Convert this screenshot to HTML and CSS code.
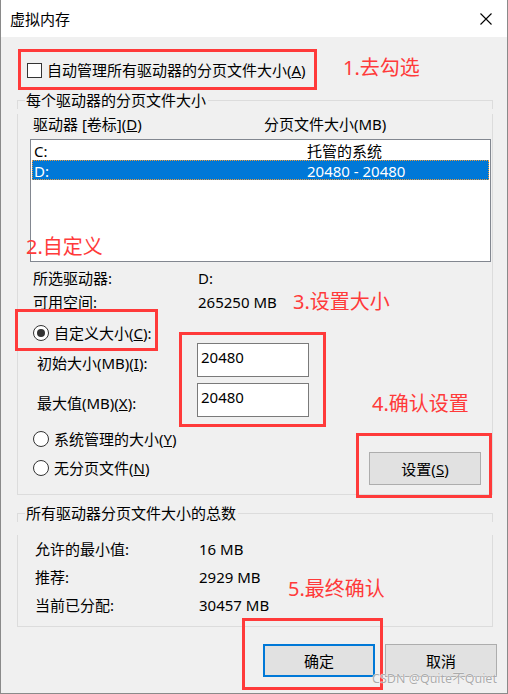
FILE: index.html
```html
<!DOCTYPE html>
<html lang="zh-CN">
<head>
<meta charset="utf-8">
<title>虚拟内存</title>
<link rel="stylesheet" href="styles.css">
</head>
<body>
<div class="window">
  <div class="titlebar">
    <span class="title">虚拟内存</span>
    <svg class="close" viewBox="0 0 12 12" width="12" height="12"><path d="M0.5 0.5 L11.5 11.5 M11.5 0.5 L0.5 11.5" stroke="#000" stroke-width="1.1" fill="none"/></svg>
  </div>
  <div class="content">
    <div class="auto-row"><span class="checkbox"></span><span>自动管理所有驱动器的分页文件大小(<u>A</u>)</span></div>

    <section class="group g1">
      <div class="group-head"><span>每个驱动器的分页文件大小</span></div>
      <div class="group-body">
        <div class="list-head"><span>驱动器 [卷标](<u>D</u>)</span><span>分页文件大小(MB)</span></div>
        <div class="listbox">
          <div class="row"><span>C:</span><span>托管的系统</span></div>
          <div class="row selected"><span>D:</span><span>20480 - 20480</span></div>
        </div>
        <div class="info">
          <span>所选驱动器:</span><span>D:</span>
          <span>可用空间:</span><span>265250 MB</span>
        </div>
        <div class="radio-row custom"><span class="radio checked"></span><span>自定义大小(<u>C</u>):</span></div>
        <div class="size-grid">
          <span class="size-label">初始大小(MB)(<u>I</u>):</span><div class="textbox">20480</div>
          <span class="size-label">最大值(MB)(<u>X</u>):</span><div class="textbox">20480</div>
        </div>
        <div class="bottom">
          <div class="radios">
            <div class="radio-row"><span class="radio"></span><span>系统管理的大小(<u>Y</u>)</span></div>
            <div class="radio-row second"><span class="radio"></span><span>无分页文件(<u>N</u>)</span></div>
          </div>
          <button class="btn set">设置(<u>S</u>)</button>
        </div>
      </div>
    </section>

    <section class="group g2">
      <div class="group-head"><span>所有驱动器分页文件大小的总数</span></div>
      <div class="group-body">
        <div class="totals">
          <span>允许的最小值:</span><span>16 MB</span>
          <span>推荐:</span><span>2929 MB</span>
          <span>当前已分配:</span><span>30457 MB</span>
        </div>
      </div>
    </section>

    <div class="actions">
      <button class="btn ok">确定</button>
      <button class="btn">取消</button>
    </div>
  </div>

  <div class="mark m1"></div>
  <div class="mark m2"></div>
  <div class="mark m3"></div>
  <div class="mark m4"></div>
  <div class="mark m5"></div>
  <div class="note n1">1.去勾选</div>
  <div class="note n2">2.自定义</div>
  <div class="note n3">3.设置大小</div>
  <div class="note n4">4.确认设置</div>
  <div class="note n5">5.最终确认</div>
  <div class="watermark">CSDN @Quite不Quiet</div>
</div>
</body>
</html>
```
FILE: styles.css
```css
body {
  margin: 0;
  background: #fff;
  font-family: "Noto Sans", "Noto Sans CJK SC", sans-serif;
  font-size: 15px;
  color: #000;
}

.window {
  position: relative;
  width: 508px;
  height: 694px;
  box-sizing: border-box;
  border: 1px solid #8a8a8a;
  border-top: none;
  background: #f0f0f0;
  overflow: hidden;
}

.titlebar {
  height: 37px;
  background: #fff;
  display: flex;
  align-items: center;
  justify-content: space-between;
  padding: 0 15px 0 9px;
}

.title {
  line-height: 20px;
  margin-top: 1px;
}

.close {
  display: block;
  width: 12px;
  height: 12px;
}

.auto-row {
  display: flex;
  align-items: center;
  height: 20px;
  line-height: 20px;
  margin-top: 23px;
  padding-left: 26px;
}

.checkbox {
  width: 15px;
  height: 15px;
  box-sizing: border-box;
  border: 1px solid #333;
  background: #fff;
  margin-right: 5px;
}

.group {
  margin-left: 16px;
  width: 476px;
}

.g1 { margin-top: 11px; }
.g2 { margin-top: 9px; }

.group-head {
  display: flex;
  height: 18px;
  line-height: 18px;
}

.group-head::before,
.group-head::after {
  content: "";
  box-sizing: border-box;
  height: 9px;
  align-self: flex-end;
  border-top: 1px solid #dcdcdc;
}

.group-head::before {
  width: 8px;
  border-left: 1px solid #dcdcdc;
}

.group-head::after {
  flex: 1;
  border-right: 1px solid #dcdcdc;
}

.group-head span {
  padding: 0 2px 0 1px;
  white-space: nowrap;
}

.group-body {
  border: 1px solid #dcdcdc;
  border-top: none;
}

.g1 .group-body { padding: 0 1px 9px 12px; }
.g2 .group-body { padding: 0 1px 7px 12px; }

.list-head {
  display: grid;
  grid-template-columns: 231px 1fr;
  line-height: 20px;
  margin-top: 5px;
  padding-left: 3px;
}

.listbox {
  margin-top: 5px;
  height: 123px;
  box-sizing: border-box;
  border: 1px solid #828790;
  background: #fff;
}

.row {
  display: grid;
  grid-template-columns: 273px 1fr;
  height: 20px;
  line-height: 20px;
  box-sizing: border-box;
  margin: 0 1px;
  padding-left: 1px;
  border: 1px solid transparent;
}

.row.selected {
  background: #0078d7;
  color: #fff;
  border: 1px dotted #e99a3c;
}

.info {
  display: grid;
  grid-template-columns: 165px 1fr;
  line-height: 24px;
  margin-top: 4px;
  padding-left: 3px;
}

.radio-row {
  display: flex;
  align-items: center;
  height: 20px;
  line-height: 20px;
  padding-left: 3px;
}

.radio-row.custom { margin-top: 9px; }
.radio-row.second { margin-top: 9px; }

.radio {
  width: 16px;
  height: 16px;
  box-sizing: border-box;
  border: 1px solid #333;
  border-radius: 50%;
  background: #fff;
  margin-right: 5px;
  display: flex;
  align-items: center;
  justify-content: center;
}

.radio.checked::after {
  content: "";
  width: 8px;
  height: 8px;
  border-radius: 50%;
  background: #333;
}

.size-grid {
  display: grid;
  grid-template-columns: 160px 112px;
  grid-auto-rows: 34px;
  row-gap: 6px;
  padding-left: 7px;
}

.size-label {
  line-height: 20px;
  padding-top: 10px;
}

.textbox {
  box-sizing: border-box;
  width: 112px;
  height: 34px;
  border: 1px solid #7a7a7a;
  background: #fff;
  padding: 3px 0 0 3px;
  line-height: 20px;
}

.bottom {
  display: flex;
  justify-content: space-between;
  align-items: flex-start;
  margin-top: 12px;
}

.btn {
  width: 112px;
  height: 33px;
  box-sizing: border-box;
  border: 1px solid #adadad;
  background: #e1e1e1;
  font: inherit;
  line-height: 20px;
  color: #000;
  padding: 0;
}

.btn.set {
  margin-top: 23px;
  margin-right: 10px;
}

.btn.ok {
  border: 2px solid #0078d7;
}

.totals {
  display: grid;
  grid-template-columns: 164px 1fr;
  line-height: 28px;
  margin-top: 13px;
  padding-left: 5px;
}

.actions {
  display: flex;
  justify-content: flex-end;
  gap: 10px;
  margin-top: 17px;
  padding-right: 10px;
}

.mark {
  position: absolute;
  box-sizing: border-box;
  border: 3px solid #ff3a3a;
}

.m1 { left: 17px; top: 49px; width: 299px; height: 41px; }
.m2 { left: 14px; top: 309px; width: 143px; height: 42px; }
.m3 { left: 178px; top: 332px; width: 147px; height: 95px; }
.m4 { left: 355px; top: 433px; width: 136px; height: 65px; }
.m5 { left: 241px; top: 618px; width: 141px; height: 72px; }

.note {
  position: absolute;
  color: #ff3a3a;
  font-size: 20px;
  line-height: 24px;
  white-space: nowrap;
}

.n1 { left: 342px; top: 56px; }
.n2 { left: 25px; top: 235px; }
.n3 { left: 292px; top: 290px; }
.n4 { left: 371px; top: 392px; }
.n5 { left: 287px; top: 577px; }

.watermark {
  position: absolute;
  left: 371px;
  top: 670px;
  font-size: 12.5px;
  line-height: 18px;
  color: #ababab;
  white-space: nowrap;
  text-shadow: 0 0 1px #fff, 0 0 1px #fff;
}
```
